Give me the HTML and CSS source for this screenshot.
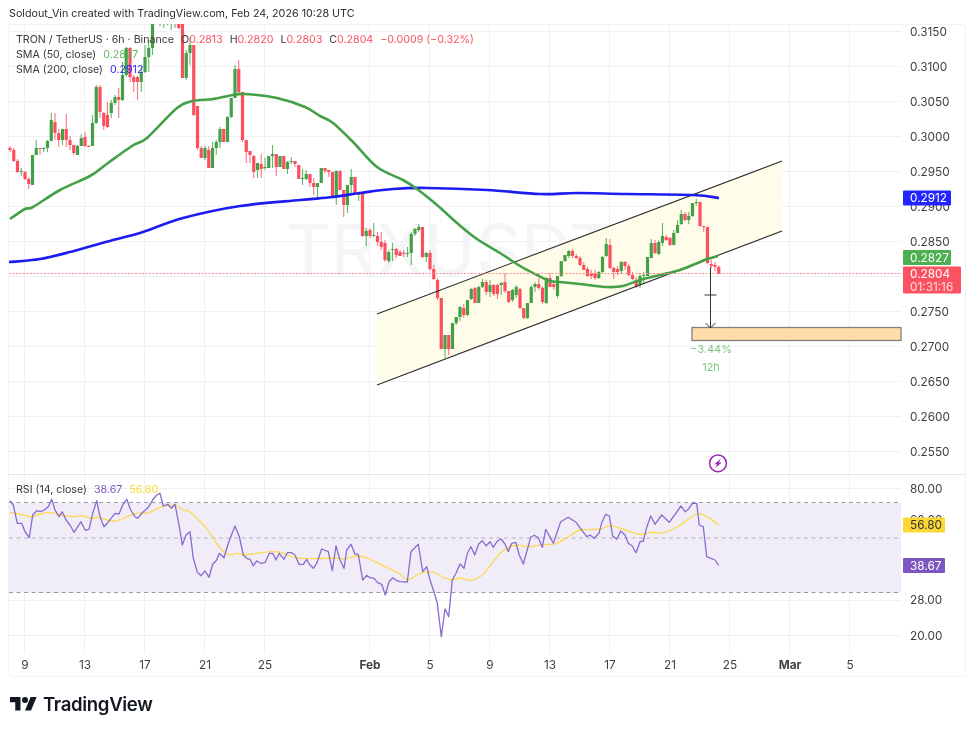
FILE: index.html
```html
<!DOCTYPE html>
<html lang="en">
<head>
<meta charset="utf-8">
<title>TRON / TetherUS chart</title>
<link rel="stylesheet" href="styles.css">
</head>
<body>
<header class="byline">Soldout_Vin created with TradingView.com, Feb 24, 2026 10:28 UTC</header>
<main class="frame">
  <section class="pane pane-price">
    <svg id="price" class="plot" width="958" height="451" viewBox="8 24 958 451"></svg>
    <div class="legend legend-price">
      <div class="legend-row">
        <span class="gap">TRON / TetherUS · 6h · Binance</span>
        <span class="gap">O<span class="down">0.2813</span></span>
        <span class="gap">H<span class="down">0.2820</span></span>
        <span class="gap">L<span class="down">0.2803</span></span>
        <span class="gap">C<span class="down">0.2804</span></span>
        <span class="down">−0.0009 (−0.32%)</span>
      </div>
      <div class="legend-row"><span class="gap">SMA (50, close)</span><span class="sma50">0.2827</span></div>
      <div class="legend-row"><span class="gap">SMA (200, close)</span><span class="sma200">0.2912</span></div>
    </div>
  </section>
  <section class="pane pane-rsi">
    <svg id="rsi" class="plot" width="958" height="178" viewBox="8 475 958 178"></svg>
    <div class="legend legend-rsi">
      <div class="legend-row"><span class="gap">RSI (14, close)</span><span class="gap rsi-val">38.67</span><span class="rsi-ma">56.80</span></div>
    </div>
  </section>
  <svg id="time" class="plot" width="958" height="24" viewBox="8 653 958 24"></svg>
</main>
<footer class="brand">
  <svg class="brand-mark" width="27" height="21" viewBox="0 0 36 28" aria-hidden="true"><path d="M14 22H7V11H0V4h14v18zM28 22h-8l7.5-18h8L28 22z"></path><circle cx="20" cy="8" r="4"></circle></svg>
  <span class="brand-name">TradingView</span>
</footer>
<script src="chart.js"></script>
</body>
</html>
```

FILE: styles.css
```css
* { box-sizing: border-box; }
html, body { margin: 0; padding: 0; background: #fff; }
body { width: 975px; height: 731px; overflow: hidden; font-family: Inter, "Liberation Sans", sans-serif; color: #333; }

.byline { height: 24px; padding: 7px 0 0 9px; font-size: 10.75px; line-height: 14px; color: #2e2e2e; white-space: nowrap; filter: blur(.3px); }

.frame { width: 958px; height: 653px; margin-left: 8px; border-radius: 3px; outline: 1px solid #f3f3f4; outline-offset: -1px; }
.pane { position: relative; }
.pane-price { height: 451px; }
.pane-rsi { height: 178px; }
.plot { display: block; overflow: hidden; filter: blur(.4px); }

.legend { position: absolute; left: 8px; font-size: 10.65px; line-height: 15px; color: #3a3a3a; white-space: nowrap; filter: blur(.3px); }
.legend-price { top: 8px; }
.legend-rsi { top: 7px; }
.legend-row { display: flex; }
.gap { margin-right: 7px; }
.down { color: #f7525f; }
.sma50 { color: #5cb660; }
.sma200 { color: #2a2aff; }
.rsi-val { color: #7e57c2; }
.rsi-ma { color: #fdd835; }

.brand { display: flex; align-items: center; gap: 6px; padding: 16px 0 0 10px; filter: blur(.3px); }
.brand-mark { fill: #131722; display: block; }
.brand-name { font-size: 18.6px; line-height: 22px; font-weight: 600; letter-spacing: -0.35px; color: #131722; }

/* chart drawing */
.grid { stroke: #f0f0f2; stroke-width: 1; fill: none; }
.divider { stroke: #e6e6e8; stroke-width: 1; }
.wm { font-size: 70px; fill: #f4f5f5; text-anchor: middle; }
.channel { fill: #fffde9; stroke: none; }
.trend { stroke: #2a2a2a; stroke-width: 1.1; fill: none; }
.c-up { fill: #43a047; }
.c-down { fill: #fb4f60; }
.w-up { stroke: #63b667; stroke-width: 1.1; }
.w-down { stroke: #fb7581; stroke-width: 1.1; }
.ma50 { stroke: #43a047; stroke-width: 2.6; fill: none; stroke-linejoin: round; }
.ma200 { stroke: #1c1cf0; stroke-width: 2.7; fill: none; stroke-linejoin: round; }
.last { stroke: #ff8a94; stroke-width: 1.2; stroke-dasharray: 2 1.5; }
.proj-box { fill: #ffdcaa; stroke: #808080; stroke-width: 1.3; }
.proj-line { stroke: #333; stroke-width: 1; fill: none; }
.proj-text { font-size: 11px; fill: #7cc67f; text-anchor: middle; }
.bolt-ring { fill: #fff; stroke: #9c27b0; stroke-width: 1.5; }
.bolt { fill: #9c27b0; }
.axis { font-size: 11.8px; fill: #3f3f3f; dominant-baseline: central; }
.axis-time { text-anchor: middle; }
.axis-major { font-weight: 700; }
.tag-blue { fill: #2424ff; }
.tag-green { fill: #4caf50; }
.tag-red { fill: #fb5262; }
.tag-yellow { fill: #fdd835; }
.tag-purple { fill: #7e57c2; }
.tag-text { font-size: 11.8px; fill: #fff; dominant-baseline: central; }
.tag-text-dark { font-size: 11.8px; fill: #333; dominant-baseline: central; }
.tag-text-soft { font-size: 11.8px; fill: #ffd9dd; dominant-baseline: central; }
.band { fill: #f0edf9; }
.band-line { stroke: #9a9aa2; stroke-width: 1; stroke-dasharray: 4 3.5; }
.band-mid { stroke: #b4b4ba; stroke-width: 1; stroke-dasharray: 4 3.5; }
.rsi-line { stroke: #8a6ace; stroke-width: 1.3; fill: none; stroke-linejoin: round; }
.rsi-avg { stroke: #fcd94f; stroke-width: 1.3; fill: none; stroke-linejoin: round; }
```

FILE: chart.js
```js
var NS = 'http://www.w3.org/2000/svg';
function el(parent, name, cls, attrs, text) {
  var n = document.createElementNS(NS, name);
  if (cls) n.setAttribute('class', cls);
  for (var k in attrs) n.setAttribute(k, attrs[k]);
  if (text !== undefined) n.textContent = text;
  parent.appendChild(n);
  return n;
}
function poly(parent, cls, pts) {
  el(parent, 'polyline', cls, { points: pts.map(function (p) { return p[0] + ',' + p[1]; }).join(' ') });
}
/* Catmull-Rom through the sampled points, for the moving averages */
function smooth(parent, cls, pts) {
  var d = 'M' + pts[0][0] + ' ' + pts[0][1];
  for (var i = 0; i < pts.length - 1; i++) {
    var p0 = pts[i - 1] || pts[i], p1 = pts[i], p2 = pts[i + 1], p3 = pts[i + 2] || p2;
    d += 'C' + (p1[0] + (p2[0] - p0[0]) / 6).toFixed(1) + ' ' + (p1[1] + (p2[1] - p0[1]) / 6).toFixed(1) + ' ' +
      (p2[0] - (p3[0] - p1[0]) / 6).toFixed(1) + ' ' + (p2[1] - (p3[1] - p1[1]) / 6).toFixed(1) + ' ' + p2[0] + ' ' + p2[1];
  }
  el(parent, 'path', cls, { d: d });
}
function pairs(s, f) {
  var a = s.trim().split(/\s+/).map(Number), out = [];
  for (var i = 0; i < a.length; i += 2) out.push(f(a[i], a[i + 1]));
  return out;
}
function xy(x, y) { return [x, y]; }

var V = [25, 85, 145, 205, 265, 370, 430, 490, 550, 610, 670, 730, 790, 850];
var price = document.getElementById('price');
var rsi = document.getElementById('rsi');
var time = document.getElementById('time');

/* ---------- price pane ---------- */
V.forEach(function (x) { el(price, 'line', 'grid', { x1: x - .5, x2: x - .5, y1: 24, y2: 475 }); });
var ticks = ['0.3150','0.3100','0.3050','0.3000','0.2950','0.2900','0.2850','0.2800','0.2750','0.2700','0.2650','0.2600','0.2550'];
ticks.forEach(function (t, i) {
  var y = 31.5 + 35 * i;
  el(price, 'line', 'grid', { x1: 9, x2: 901, y1: y, y2: y });
  if (t !== '0.2800') el(price, 'text', 'axis', { x: 910, y: y }, t);
});
el(price, 'text', 'wm', { x: 450, y: 275 }, 'TRXUSDT');

el(price, 'polygon', 'channel', { points: '377,314 782,161 782,231 377,385' });

var candles = ('r146,148,150,152 r148,150,161,162 r159,161,172,173 g168,171,172,176 r171,172,179,180 r177,179,184,189 g155,155,185,185 g140,148,155,155 ' +
'r148,148,149,155 g147,148,149,152 g140,141,148,152 g113,120,141,141 r113,122,133,140 r129,133,140,147 g129,129,140,145 r114,129,140,147 ' +
'r136,140,145,150 r145,145,153,155 g145,146,155,155 g134,138,146,146 r132,137,146,147 r145,146,147,147 g115,123,146,146 g85,87,123,124 ' +
'r85,87,112,118 r112,113,126,130 r102,115,127,128 g100,103,113,118 g95,97,103,105 r88,97,100,118 g62,75,100,101 g47,48,75,77 ' +
'r47,48,77,82 r75,77,82,92 r76,77,82,100 g65,72,82,92 g45,57,72,73 g40,48,57,72 g10,10,48,55 g10,10,20,24 g10,10,20,26 g10,10,20,28 ' +
'g10,10,20,25 g10,10,18,30 g10,10,18,28 r10,18,28,29 r10,10,78,78 g50,53,78,80 g37,45,53,65 r45,45,115,116 r106,106,148,150 r146,148,158,158 ' +
'g146,148,158,160 r146,150,168,168 g142,148,168,168 g140,142,148,155 g127,129,142,148 r129,129,142,142 g116,117,142,142 g98,98,117,118 ' +
'g65,69,98,98 r60,69,92,95 r92,92,140,142 r140,140,152,163 r151,151,155,163 r155,156,172,178 g163,163,170,178 r154,164,169,178 ' +
'g158,167,168,170 g156,156,168,168 g145,154,156,168 r154,154,167,176 g156,156,167,167 r156,156,169,169 g161,162,169,174 g157,161,162,164 ' +
'r161,161,164,167 r165,165,179,179 g169,178,179,185 g170,174,179,180 r174,174,183,187 r178,183,187,195 g183,183,187,198 g168,168,183,183 ' +
'r168,168,171,173 r170,170,172,177 r172,172,197,197 g170,171,197,205 r170,171,190,190 r190,190,205,217 g185,185,205,213 g169,177,185,194 ' +
'r177,177,194,194 g192,194,195,201 r193,193,236,237 g228,231,236,246 r228,230,236,238 g223,235,236,237 r232,236,242,246 r232,242,247,250 ' +
'r240,243,260,262 g250,252,261,263 g243,249,250,261 r248,249,255,258 r250,252,256,256 r250,253,254,257 g247,253,254,257 g232,234,253,265 ' +
'g228,229,234,236 g224,227,230,232 r227,227,257,258 g252,253,257,262 r250,253,269,271 r265,269,279,280 r278,280,298,300 r298,298,349,349 ' +
'g335,335,349,358 r335,335,349,355 g323,323,349,349 g317,317,323,325 g306,307,317,321 r304,308,315,318 g300,300,315,316 g288,289,299,300 ' +
'r287,288,303,303 g286,287,303,303 g279,282,287,288 r280,282,292,295 g280,285,292,297 r284,285,294,296 r284,285,294,299 g282,283,285,295 ' +
'r273,282,291,293 r291,291,302,303 g289,290,300,302 g285,287,295,298 r288,289,308,309 r308,308,318,319 g303,303,318,319 g285,287,303,303 ' +
'g282,284,287,292 r278,284,288,290 r286,288,302,304 g277,278,303,304 r273,278,287,287 r281,284,287,290 g276,276,296,298 g261,261,276,277 ' +
'g255,255,261,262 g250,251,256,258 r249,251,256,258 r254,256,258,259 r256,258,265,266 r262,265,270,270 r267,269,276,277 r270,273,276,279 ' +
'r270,273,278,280 g271,272,278,279 g256,257,272,273 g238,244,256,257 r239,245,268,269 r267,268,272,279 r266,269,272,275 g261,262,271,274 ' +
'r261,262,266,270 r264,266,275,276 r272,275,279,280 r277,280,286,288 g274,276,285,288 g272,275,276,284 g257,257,276,276 g239,243,258,258 ' +
'r240,243,253,254 g240,242,254,255 g223,236,243,246 r235,237,240,241 r237,238,245,246 g230,233,245,245 g220,225,233,233 g210,214,224,225 ' +
'r212,214,220,221 g212,216,220,224 g203,203,216,217 g199,202,203,206 r202,202,226,227 r226,226,227,232 r227,227,263,264 r260,264,266,268 ' +
'r262,265,267,271 r265,267,274,274').split(' ');

candles.forEach(function (c, i) {
  var up = c[0] === 'g', v = c.slice(1).split(',').map(Number), x = 10 + 3.75 * i;
  el(price, 'line', up ? 'w-up' : 'w-down', { x1: x, x2: x, y1: v[0], y2: v[3] });
  el(price, 'rect', up ? 'c-up' : 'c-down', { x: x - 1.6, y: v[1], width: 3.2, height: Math.max(v[2] - v[1], 1) });
});

el(price, 'line', 'trend', { x1: 377, y1: 314, x2: 782, y2: 161 });
el(price, 'line', 'trend', { x1: 377, y1: 385, x2: 782, y2: 231 });

smooth(price, 'ma200', pairs('9 262 40 259 70 252 113 240 143 232 183 218 240 206 300 200 333 197 360 193 393 189 427 188 487 190 540 194 577 193 627 194 693 195 719 198', xy));
smooth(price, 'ma50', pairs('10 219 25 209 33 207 60 190 90 176 108 163 132 146 147 138 177 108 193 101 213 99 233 95 245 94 277 98 305 107 320 116 333 123 353 142 377 167 403 180 417 189 437 205 457 223 477 239 500 253 520 266 537 275 550 281 560 282 580 284 607 287 623 286 640 280 660 275 680 270 700 262 707 259 718 256', xy));

el(price, 'line', 'last', { x1: 9, x2: 901, y1: 273.5, y2: 273.5 });

el(price, 'rect', 'proj-box', { x: 692, y: 327.5, width: 209, height: 13 });
el(price, 'path', 'proj-line', { d: 'M710.5 267V328M704.5 295H716.5M705.5 323l5 5 5-5' });
el(price, 'text', 'proj-text', { x: 711, y: 353 }, '−3.44%');
el(price, 'text', 'proj-text', { x: 711, y: 371 }, '12h');

el(price, 'circle', 'bolt-ring', { cx: 718, cy: 463.3, r: 8.4 });
el(price, 'path', 'bolt', { d: 'M720.8 458.6L714.4 464.2H717.2L715.4 468L721.8 462.4H718.9Z' });

el(price, 'line', 'divider', { x1: 8, x2: 966, y1: 474.5, y2: 474.5 });

function tag(svg, cls, x, y, w, h) { el(svg, 'rect', cls, { x: x, y: y, width: w, height: h, rx: 1 }); }
tag(price, 'tag-blue', 903, 190.5, 48, 15);
el(price, 'text', 'tag-text', { x: 910, y: 198 }, '0.2912');
tag(price, 'tag-green', 903, 250, 48, 15);
el(price, 'text', 'tag-text', { x: 910, y: 257.5 }, '0.2827');
tag(price, 'tag-red', 903, 266.5, 58, 27);
el(price, 'text', 'tag-text', { x: 910, y: 274 }, '0.2804');
el(price, 'text', 'tag-text-soft', { x: 910, y: 286.5 }, '01:31:16');

/* ---------- RSI pane ---------- */
V.forEach(function (x) { el(rsi, 'line', 'grid', { x1: x - .5, x2: x - .5, y1: 475, y2: 653 }); });
el(rsi, 'rect', 'band', { x: 9, y: 503, width: 892, height: 89.5 });
[488.5, 519.5, 561.5, 600.5, 635.5].forEach(function (y) { el(rsi, 'line', 'grid', { x1: 9, x2: 901, y1: y, y2: y }); });
el(rsi, 'line', 'band-line', { x1: 9, x2: 901, y1: 502.5, y2: 502.5 });
el(rsi, 'line', 'band-mid', { x1: 9, x2: 901, y1: 538, y2: 538 });
el(rsi, 'line', 'band-line', { x1: 9, x2: 901, y1: 592.5, y2: 592.5 });

function z4(x, y) { return [+(x / 3).toFixed(1), +(470 + y / 3).toFixed(1)]; }
function z5(x, y) { return [+(490 + x / 3).toFixed(1), +(440 + y / 3).toFixed(1)]; }

var rsiPts = pairs('30 92 40 105 52 160 65 160 75 185 88 203 98 135 110 122 122 125 133 120 145 110 155 88 165 120 177 140 187 125 198 150 210 165 222 187 243 155 255 180 267 178 278 130 290 92 300 140 312 170 323 158 345 130 357 132 368 105 380 88 392 120 405 140 413 145 425 130 445 112 458 90 470 75 480 70 490 108 503 103 514 115 525 103 537 165 547 225 558 195 570 185 580 265 592 307 603 317 615 303 627 322 638 283 650 270 658 250 672 263 685 220 705 168 718 200 730 255 740 265 750 268 760 287 770 273 782 280 795 278 808 250 818 250 828 270 838 250 852 268 862 248 875 248 885 255 897 283 910 283 920 268 930 285 940 295 950 280 965 237 985 245 997 302 1008 228 1020 270 1032 295 1040 240 1053 223 1065 252 1075 253 1088 330 1100 316 1110 323 1122 325 1133 338 1145 343 1156 375 1167 335 1178 323 1190 332 1200 335 1222 336 1233 245 1255 223 1268 305 1280 290 1290 330 1302 365 1312 400 1324 500 1335 417 1346 440 1357 330 1368 310 1380 282 1392 295 1402 250 1413 230 1424 255 1436 222 1447 212 1458 228 1470 215', z4)
  .concat(pairs('10 322 22 303 33 297 45 312 55 335 65 310 77 307 88 345 100 372 122 292 133 286 145 293 157 322 167 268 190 310 212 245 235 232 258 247 290 290 300 285 312 295 327 280 335 248 347 223 358 228 368 288 380 298 392 273 405 285 415 310 427 318 438 338 450 305 460 303 470 262 482 228 495 253 515 225 538 247 573 198 585 215 595 208 607 190 620 190 628 255 640 260 650 350 675 360 686 376', z5));
var avgPts = pairs('30 127 60 133 95 140 120 132 155 128 180 135 220 140 245 137 275 145 295 142 330 152 350 152 380 140 410 130 445 128 480 112 525 106 550 120 570 125 590 145 615 170 640 205 665 240 690 255 710 250 735 255 770 250 820 245 850 250 880 262 910 265 960 266 1000 264 1035 267 1070 258 1105 265 1130 278 1180 302 1200 312 1225 329 1260 310 1300 307 1330 322 1355 330 1380 324 1410 331 1440 320 1470 288', z4)
  .concat(pairs('35 335 80 315 110 320 160 314 200 310 235 290 270 270 330 267 360 257 400 268 450 284 480 277 520 278 560 262 620 222 650 230 686 255', z5));
smooth(rsi, 'rsi-avg', avgPts);
poly(rsi, 'rsi-line', rsiPts);

[['80.00', 488.5], ['60.00', 519.5], ['28.00', 600], ['20.00', 635.5]].forEach(function (t) {
  el(rsi, 'text', 'axis', { x: 910, y: t[1] }, t[0]);
});
tag(rsi, 'tag-yellow', 903, 517.5, 42, 15);
el(rsi, 'text', 'tag-text-dark', { x: 910, y: 525 }, '56.80');
tag(rsi, 'tag-purple', 903, 558, 42, 15);
el(rsi, 'text', 'tag-text', { x: 910, y: 565.5 }, '38.67');

/* ---------- time axis ---------- */
var labels = ['9', '13', '17', '21', '25', 'Feb', '5', '9', '13', '17', '21', '25', 'Mar', '5'];
labels.forEach(function (t, i) {
  var major = t === 'Feb' || t === 'Mar';
  el(time, 'text', 'axis axis-time' + (major ? ' axis-major' : ''), { x: V[i], y: 665 }, t);
});
```
